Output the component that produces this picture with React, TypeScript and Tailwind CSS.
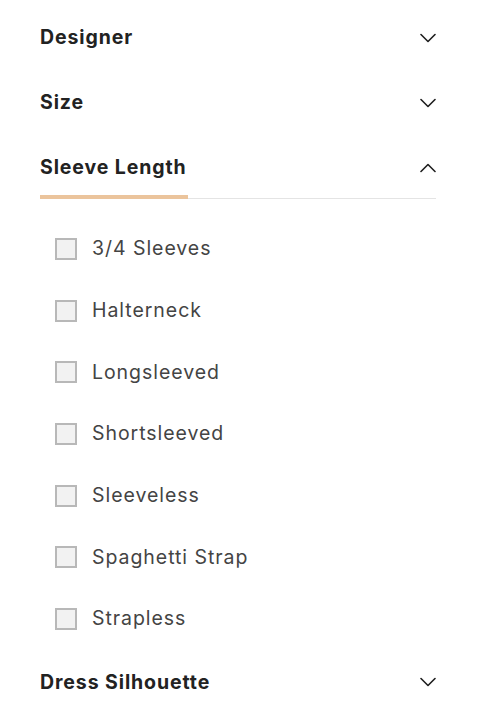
const options = [
  '3/4 Sleeves',
  'Halterneck',
  'Longsleeved',
  'Shortsleeved',
  'Sleeveless',
  'Spaghetti Strap',
  'Strapless',
]

function Chevron({ up = false }: { up?: boolean }) {
  return (
    <svg width="16" height="16" viewBox="0 0 16 16" fill="none" className="shrink-0">
      <path
        d={up ? 'M1 11.5L8 4.5L15 11.5' : 'M1 4.5L8 11.5L15 4.5'}
        stroke="#1f1f1f"
        strokeWidth="1.6"
        strokeLinecap="round"
        strokeLinejoin="round"
      />
    </svg>
  )
}

function Header({ title }: { title: string }) {
  return (
    <div className="h-[65px] flex items-center justify-between">
      <span className="text-[19.5px] font-bold tracking-[0.9px] text-[#222]">{title}</span>
      <Chevron />
    </div>
  )
}

export default function App() {
  return (
    <div className="w-[480px] h-[717px] bg-white overflow-hidden font-['Inter',sans-serif]">
      <div className="ml-10 w-[396px] pt-[5px]">
        <Header title="Designer" />
        <Header title="Size" />

        {/* Sleeve Length (open) */}
        <div>
          <div className="h-[60px] flex items-center justify-between pt-[6px]">
            <span className="text-[19.5px] font-bold tracking-[0.9px] text-[#222]">Sleeve Length</span>
            <Chevron up />
          </div>
          <div className="flex items-end h-[4px]">
            <div className="w-[148px] h-[4px] bg-[#ebc49c]" />
            <div className="flex-1 h-px bg-[#e4e4e4]" />
          </div>
          <div className="pt-[19px]">
            {options.map(o => (
              <label key={o} className="h-[61.7px] flex items-center gap-[15px] pl-[15px]">
                <span className="w-[22px] h-[22px] border-2 border-[#b8b8b8] bg-[#f2f2f2] shrink-0" />
                <span className="text-[19.5px] tracking-[0.95px] text-[#444]">{o}</span>
              </label>
            ))}
          </div>
        </div>

        <Header title="Dress Silhouette" />
      </div>
    </div>
  )
}
